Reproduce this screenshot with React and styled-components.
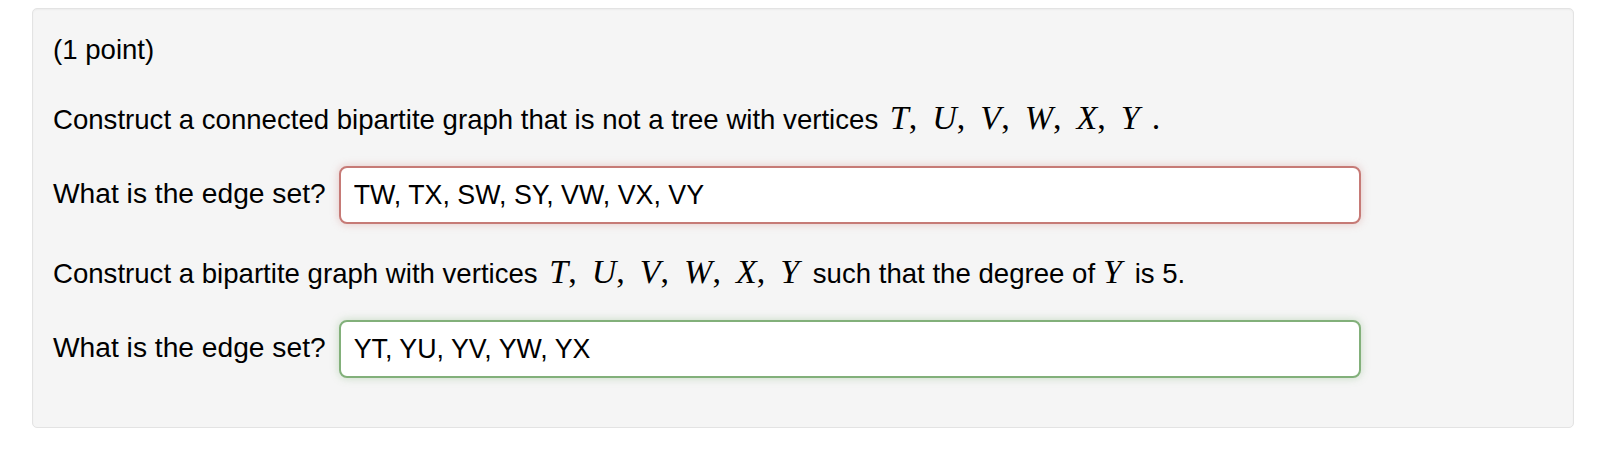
import React from "react";
import styled, { createGlobalStyle } from "styled-components";

const GlobalStyle = createGlobalStyle`
    body {
        margin: 0;
        background: #ffffff;
        font-family: "Liberation Sans", Arial, sans-serif;
        color: #000000;
    }
`

const questions = [
    {
        before: "Construct a connected bipartite graph that is not a tree with vertices",
        after: [{ text: ".", math: true }],
        answer: "TW, TX, SW, SY, VW, VX, VY",
        status: "incorrect",
    },
    {
        before: "Construct a bipartite graph with vertices",
        after: [
            { text: "such that the degree of" },
            { text: "Y", math: true },
            { text: "is 5." },
        ],
        answer: "YT, YU, YV, YW, YX",
        status: "correct",
    },
];

const vertices = ["T", "U", "V", "W", "X", "Y"];

function VertexList() {
    return (
        <MathSpan $after={6}>
            {vertices.map((v, i) => (
                <React.Fragment key={v}>
                    <Var>{v}</Var>
                    {i < vertices.length - 1 && <Comma>,</Comma>}
                </React.Fragment>
            ))}
        </MathSpan>
    )
}

export default function App() {
    return (
        <Page>
            <GlobalStyle />
            <Well>
                <Line>(1 point)</Line>
                {questions.map((q, index) => (
                    <React.Fragment key={index}>
                        <Line>
                            {q.before} <VertexList />
                            {q.after.map((part, i) =>
                                part.math ? (
                                    part.text === "." ? (
                                        <Period key={i}>.</Period>
                                    ) : (
                                        <MathSpan key={i} $before={8} $after={5}>
                                            <Var>{part.text}</Var>
                                        </MathSpan>
                                    )
                                ) : (
                                    <span key={i}> {part.text}</span>
                                )
                            )}
                        </Line>
                        <AnswerRow>
                            <Label>What is the edge set?</Label>
                            <AnswerInput
                                $status={q.status}
                                defaultValue={q.answer}
                                spellCheck={false}
                            />
                        </AnswerRow>
                    </React.Fragment>
                ))}
            </Well>
        </Page>
    )
}

const Page = styled.div`
    padding: 8px 28px 35px 32px;
`
const Well = styled.div`
    background: #f5f5f5;
    border: 1px solid #e3e3e3;
    border-radius: 5px;
    box-shadow: inset 0 1px 2px rgba(0, 0, 0, 0.04);
    padding: 21px 20px 49px 20px;
    display: flex;
    flex-direction: column;
    gap: 28px;
`
const Line = styled.div`
    font-size: 27.6px;
    line-height: 40px;
    white-space: nowrap;
`
const MathSpan = styled.span`
    font-family: "Liberation Serif", "Times New Roman", serif;
    font-size: 34px;
    margin-left: ${(p) => p.$before ?? 4}px;
    margin-right: ${(p) => p.$after ?? 0}px;
`
const Var = styled.i`
    font-style: italic;
`
const Comma = styled.span`
    font-style: normal;
    margin-right: 15px;
`
const Period = styled.span`
    font-family: "Liberation Serif", "Times New Roman", serif;
    font-size: 34px;
    margin-left: 6px;
`
const AnswerRow = styled.div`
    display: flex;
    align-items: center;
    gap: 13px;
    margin-top: -2px;
`
const Label = styled.span`
    font-size: 28.2px;
    line-height: 40px;
    white-space: nowrap;
    margin-bottom: 4px;
`
const AnswerInput = styled.input`
    box-sizing: border-box;
    width: 1022px;
    height: 58px;
    padding: 0 13px;
    font-family: "Liberation Sans", Arial, sans-serif;
    font-size: 26.8px;
    color: #000000;
    background: #ffffff;
    border-radius: 8px;
    outline: none;
    border: 2px solid ${(p) => (p.$status === "correct" ? "#82b07a" : "#c67a76")};
    box-shadow: 0 0 9px ${(p) =>
        p.$status === "correct" ? "rgba(110, 170, 100, 0.35)" : "rgba(200, 110, 105, 0.35)"};
`
